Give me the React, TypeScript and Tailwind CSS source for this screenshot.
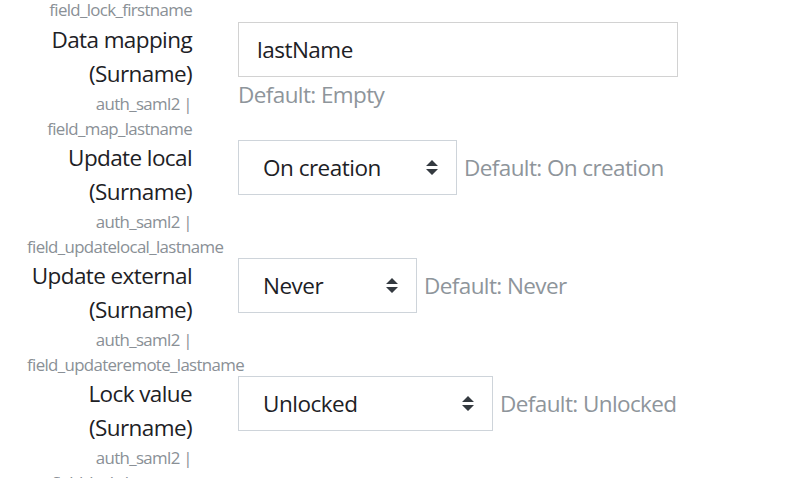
const font = { fontFamily: '"Open Sans", "Noto Sans", sans-serif' };

type Row = {
  title: string;
  key: string;
  kind: "text" | "select";
  value: string;
  width: string;
  def: string;
};

const rows: Row[] = [
  { title: "Data mapping", key: "field_map_lastname", kind: "text", value: "lastName", width: "w-[440px]", def: "Default: Empty" },
  { title: "Update local", key: "field_updatelocal_lastname", kind: "select", value: "On creation", width: "w-[219px]", def: "Default: On creation" },
  { title: "Update external", key: "field_updateremote_lastname", kind: "select", value: "Never", width: "w-[179px]", def: "Default: Never" },
  { title: "Lock value", key: "field_lock_lastname", kind: "select", value: "Unlocked", width: "w-[255px]", def: "Default: Unlocked" },
];

function Arrows() {
  return (
    <svg width="12" height="15" viewBox="0 0 4 5" className="shrink-0">
      <path d="M2 0L0 2h4zm0 5L0 3h4z" fill="#343a40" />
    </svg>
  );
}

function SettingRow({ row }: { row: Row }) {
  return (
    <div className="flex h-[118px]">
      <div className="ml-[27px] w-[165px] shrink-0 pt-[1px] text-right">
        <div className="text-[22.5px] leading-[33.75px] text-[#1d2125] tracking-[-0.6px]">
          <div>{row.title}</div>
          <div>(Surname)</div>
        </div>
        <div className="text-[16.875px] leading-[25px] text-[#8a9096] tracking-[-0.65px]">
          <div>auth_saml2 |</div>
          <div>{row.key}</div>
        </div>
      </div>
      <div className="ml-[46px]">
        {row.kind === "text" ? (
          <div>
            <div className={`${row.width} h-[55px] border border-[#d2d2d2] bg-white flex items-center pl-[18px] text-[22.5px] text-[#1d2125] tracking-[-0.5px]`}>
              {row.value}
            </div>
            <div className="mt-[1px] text-[22.5px] leading-[33.75px] text-[#8e959b] tracking-[-0.6px]">{row.def}</div>
          </div>
        ) : (
          <div className="flex items-center">
            <div className={`${row.width} h-[55px] border border-[#ced4da] bg-white flex items-center justify-between pl-[24px] pr-[18px] text-[22.5px] text-[#1d2125] tracking-[-0.5px]`}>
              <span>{row.value}</span>
              <Arrows />
            </div>
            <div className="ml-[7px] text-[22.5px] leading-[33.75px] text-[#8e959b] tracking-[-0.6px]">{row.def}</div>
          </div>
        )}
      </div>
    </div>
  );
}

export default function App() {
  return (
    <div className="h-[478px] w-[794px] overflow-hidden bg-white" style={font}>
      <div className="-mt-[3px] ml-[27px] h-[25px] w-[165px] text-right text-[16.875px] leading-[25px] text-[#8a9096] tracking-[-0.65px]">
        field_lock_firstname
      </div>
      {rows.map((r) => (
        <SettingRow key={r.key} row={r} />
      ))}
    </div>
  );
}
